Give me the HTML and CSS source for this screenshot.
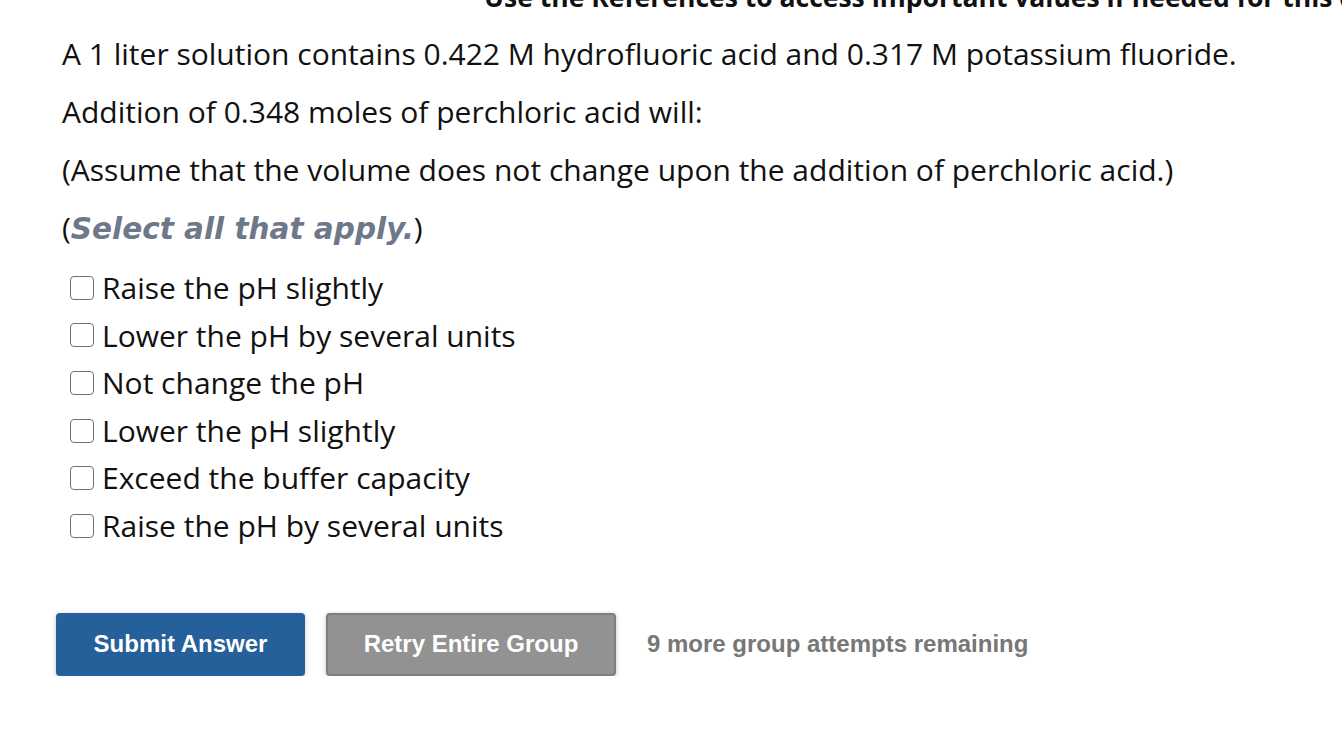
FILE: index.html
```html
<!DOCTYPE html>
<html>
<head>
<meta charset="utf-8">
<link rel="stylesheet" href="styles.css">
</head>
<body>
<div class="page">
  <div class="refs">Use the References to access important values if needed for this question.</div>
  <p class="q">A 1 liter solution contains 0.422 M hydrofluoric acid and 0.317 M potassium fluoride.</p>
  <p class="q">Addition of 0.348 moles of perchloric acid will:</p>
  <p class="q">(Assume that the volume does not change upon the addition of perchloric acid.)</p>
  <p class="q">(<span class="sel">Select all that apply.</span>)</p>
  <ul class="opts">
    <li><span class="box"></span>Raise the pH slightly</li>
    <li><span class="box"></span>Lower the pH by several units</li>
    <li><span class="box"></span>Not change the pH</li>
    <li><span class="box"></span>Lower the pH slightly</li>
    <li><span class="box"></span>Exceed the buffer capacity</li>
    <li><span class="box"></span>Raise the pH by several units</li>
  </ul>
  <div class="actions">
    <button class="btn submit">Submit Answer</button>
    <button class="btn retry">Retry Entire Group</button>
    <span class="remain">9 more group attempts remaining</span>
  </div>
</div>
</body>
</html>
```
FILE: styles.css
```css
html, body {
  margin: 0;
  padding: 0;
  background: #ffffff;
  overflow: hidden;
}
.page {
  font-family: "Open Sans", "DejaVu Sans", sans-serif;
  font-size: 30px;
  color: #111;
  padding-left: 62px;
}
.refs {
  margin-top: -23px;
  height: 40px;
  line-height: 40px;
  font-size: 26.5px;
  font-weight: 700;
  white-space: nowrap;
  padding-left: 422px;
  color: #111;
}
.q {
  margin: 17px 0 0 0;
  line-height: 40px;
}
.q + .q {
  margin-top: 18px;
}
.sel {
  font-family: "DejaVu Sans", sans-serif;
  font-weight: 700;
  font-style: italic;
  color: #6e7889;
  font-size: 29.5px;
}
.opts {
  list-style: none;
  margin: 15px 0 0 0;
  padding: 0;
}
.opts li {
  display: flex;
  align-items: center;
  height: 47.6px;
  line-height: 47.6px;
}
.box {
  width: 24px;
  height: 24px;
  border: 1.5px solid #707070;
  border-radius: 4px;
  margin-left: 8px;
  margin-right: 8px;
  box-sizing: border-box;
  flex: none;
}
.actions {
  display: flex;
  align-items: center;
  margin-top: 63px;
  margin-left: -6px;
}
.btn {
  font-family: "Liberation Sans", Arial, sans-serif;
  font-weight: 700;
  font-size: 24px;
  color: #fff;
  height: 63px;
  border-radius: 4px;
  box-shadow: 0 1px 4px rgba(0,0,0,0.25);
  cursor: pointer;
}
.submit {
  width: 249px;
  background: #26609a;
  border: none;
}
.retry {
  width: 290px;
  margin-left: 21px;
  background: #929292;
  border: 2px solid #7e7e7e;
}
.remain {
  margin-left: 31px;
  font-family: "Liberation Sans", Arial, sans-serif;
  font-weight: 700;
  font-size: 24px;
  color: #777;
}
```
